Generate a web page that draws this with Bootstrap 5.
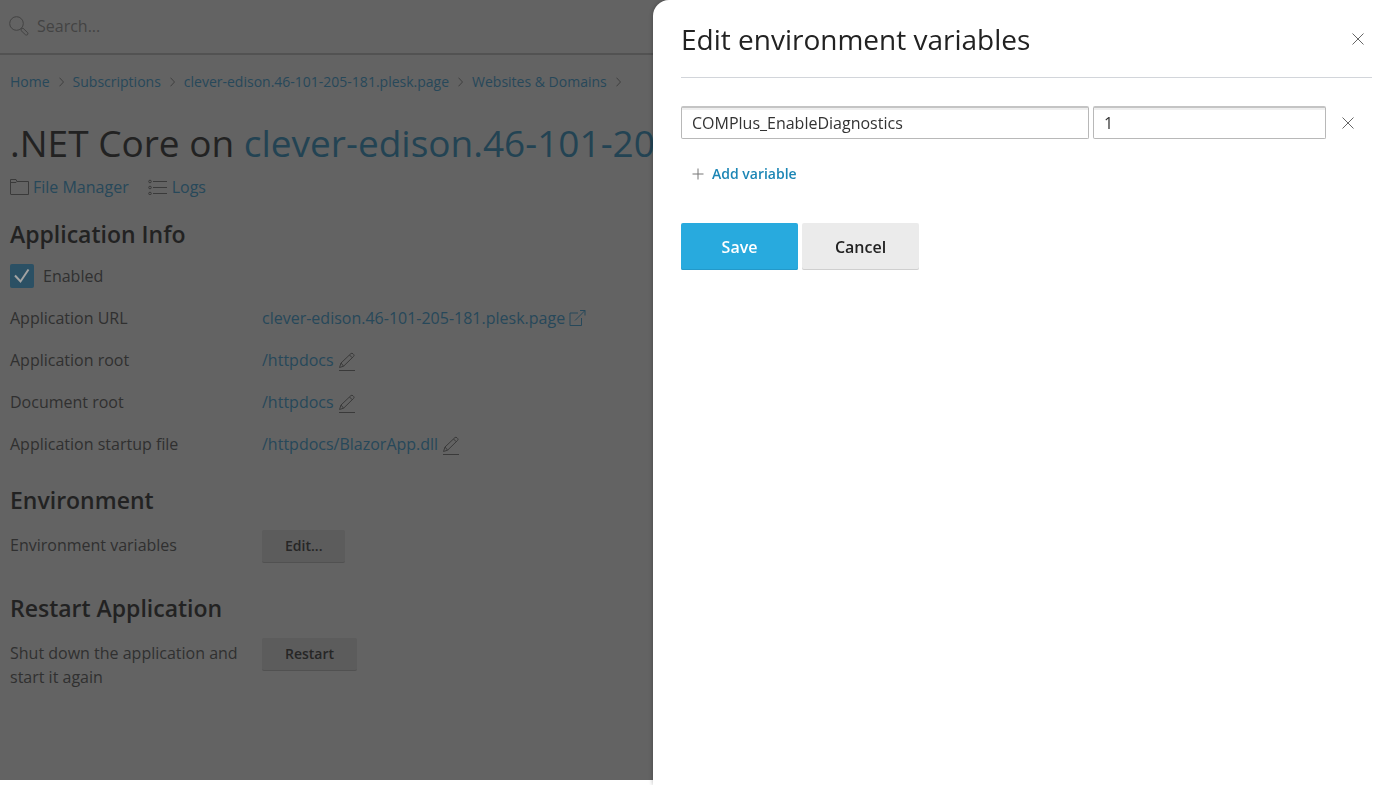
<!DOCTYPE html>
<html lang="en">
<head>
<meta charset="utf-8">
<meta name="viewport" content="width=device-width, initial-scale=1">
<title>.NET Core - Edit environment variables</title>
<link href="https://cdn.jsdelivr.net/npm/bootstrap@5.3.0/dist/css/bootstrap.min.css" rel="stylesheet">
<style>
  body { font-family: "Open Sans", "Noto Sans", sans-serif; font-size: 16px; line-height: 24px; color: #303030; background: #fff; overflow: hidden; --drawer-width: 731px; }
  a { color: #27485a; text-decoration: none; }
  svg { fill: none; stroke: currentColor; flex: none; }
  .dimmed-page { background: #636363; height: calc(100vh - 5px); overflow: hidden; }
  .search-bar { height: 55px; padding: 0 9px 2px; border-bottom: 2px solid #525252; gap: 8px; color: #434343; }
  .search-bar input { background: transparent; border: 0; padding: 0; color: #434343; box-shadow: none; outline: 0; width: 240px; }
  .search-bar input::placeholder { color: #434343; opacity: 1; }
  .page-body { padding: 15px 0 15px 10px; width: calc(100% - var(--drawer-width)); min-width: 0; }
  .breadcrumb { --bs-breadcrumb-margin-bottom: 21px; font-size: 14px; gap: 9px; color: #404040; flex-wrap: nowrap; white-space: nowrap; }
  h1 { font-size: 37px; line-height: 56px; margin: 0 0 4px; font-weight: 400; color: #222; white-space: nowrap; overflow: hidden; }
  h1 a { color: #234353; }
  h2 { font-size: 23px; line-height: 32px; margin: 0; font-weight: 600; color: #222; }
  .tools { gap: 19px; margin-bottom: 19px; }
  .tools a { gap: 4px; }
  .tools svg, .edit-icon { color: #3a3a3a; }
  .field-row { display: grid; grid-template-columns: 232px 1fr; column-gap: 20px; margin-bottom: 18px; }
  .enabled-row { margin: 14px 0 18px; gap: 9px; height: 24px; }
  .enabled-row .form-check-input { width: 24px; height: 24px; margin: 0; border: 0; border-radius: 2px; }
  .enabled-row .form-check-input:checked { background-color: #2b5064; background-image: url("data:image/svg+xml,%3Csvg xmlns='http://www.w3.org/2000/svg' viewBox='0 0 24 24'%3E%3Cpath d='M5 11.5l5.500 6L18.500 5.500' fill='none' stroke='%23a3a3a3' stroke-width='2'/%3E%3C/svg%3E"); background-size: 100%; }
  .btn-dim { --bs-btn-color: #262626; --bs-btn-bg: #5c5c5c; font-size: 14px; line-height: 20px; font-weight: 600; padding: 6px 23px; margin: -3px 0 1px; border: 0; border-bottom: 1px solid #515151; border-radius: 2px; vertical-align: top; }
  .section-gap { margin-top: 28px; margin-bottom: 17px; }
  .offcanvas.edit-drawer { --bs-offcanvas-width: var(--drawer-width); --bs-offcanvas-border-width: 0; border-radius: 16px 0 0 0; box-shadow: 0 0 4px rgba(0,0,0,.3); color: #222; max-width: 100%; padding: 0 12px 0 28px; }
  .drawer-head { height: 78px; border-bottom: 1px solid #d2d5da; margin-bottom: 28px; }
  .drawer-head .offcanvas-title { font-size: 28px; line-height: 40px; font-weight: 400; color: #222; }
  .icon-button { border: 0; background: none; padding: 8px; color: #666; line-height: 0; }
  .variable-row { display: grid; grid-template-columns: 7fr 4fr 36px; column-gap: 4px; align-items: center; padding-right: 6px; }
  .variable-row .form-control { height: 33px; padding: 2px 10px; font-size: 16px; line-height: 24px; color: #333; border: 1px solid #b8b8b8; border-top: 2px solid #c4c4c4; border-radius: 2px; box-shadow: inset 0 2px 0 #efefef; }
  .add-button { color: #1c86b5; font-size: 14px; line-height: 20px; font-weight: 600; border: 0; padding: 6px 11px; gap: 8px; margin: 19px 0 33px; }
  .add-button svg { color: #777; }
  .btn-form { min-width: 117px; height: 47px; font-size: 16px; line-height: 24px; font-weight: 600; border: 0; border-radius: 2px; padding: 0; }
  .btn-save { --bs-btn-color: #fff; --bs-btn-bg: #28aade; box-shadow: inset 0 -1px 0 #2399ca; }
  .btn-cancel { --bs-btn-color: #222; --bs-btn-bg: #ebebeb; box-shadow: inset 0 -1px 0 #cfcfcf; }
</style>
</head>
<body>
<svg class="d-none" aria-hidden="true">
  <symbol id="pencil" viewBox="0 0 18 20"><path d="M1.500 15.500L3 11L13 1.500Q14 .8 15 1.800L15.700 2.500Q16.500 3.500 15.600 4.400L5.600 14.200ZM11.500 3L14.200 5.700M3 11L5.600 14.200M1 18.500H17"/></symbol>
  <symbol id="cross" viewBox="0 0 12 12"><path d="M.5 .5L11.500 11.500M11.500 .5L.5 11.500"/></symbol>
  <symbol id="chevron" viewBox="0 0 5 10"><path d="M.5 .7L4.500 5L.5 9.300"/></symbol>
</svg>
<div class="dimmed-page">
  <header class="search-bar d-flex align-items-center">
    <svg width="20" height="20" viewBox="0 0 20 20"><circle cx="7.500" cy="7.500" r="6.800"/><path d="M12.200 12.700L14 12.200L18.700 16.700Q19.300 18 18.500 18.700T16.500 18.800L12 14.500Z"/></svg>
    <input type="text" placeholder="Search..." aria-label="Search">
  </header>
  <main class="page-body">
    <nav aria-label="breadcrumb">
      <div class="breadcrumb align-items-center">
        <a href="#">Home</a><svg width="5" height="10"><use href="#chevron"/></svg>
        <a href="#">Subscriptions</a><svg width="5" height="10"><use href="#chevron"/></svg>
        <a href="#">clever-edison.46-101-205-181.plesk.page</a><svg width="5" height="10"><use href="#chevron"/></svg>
        <a href="#">Websites &amp; Domains</a><svg width="5" height="10"><use href="#chevron"/></svg>
      </div>
    </nav>
    <h1>.NET Core on <a href="#">clever-edison.46-101-20</a></h1>
    <div class="tools d-flex">
      <a href="#" class="d-flex align-items-center"><svg width="19" height="16" viewBox="0 0 19 16"><path d="M.5 15V.5H6L7 2.500H18.500V15.500H.5M.5 3.500H6L7 2.500"/></svg>File Manager</a>
      <a href="#" class="d-flex align-items-center"><svg width="20" height="16" viewBox="0 0 20 16"><circle cx="2" cy="2.500" r="1.300"/><circle cx="2" cy="8.500" r="1.300"/><circle cx="2" cy="14.500" r="1.300"/><path d="M5 2.500H19M5 8.500H19M5 14.500H19"/></svg>Logs</a>
    </div>
    <section>
      <h2>Application Info</h2>
      <div class="enabled-row d-flex align-items-center">
        <input class="form-check-input" type="checkbox" id="enabled" checked>
        <label for="enabled">Enabled</label>
      </div>
      <div class="field-row"><span>Application URL</span><a href="#" class="d-flex align-items-center gap-1">clever-edison.46-101-205-181.plesk.page<svg width="17" height="18" viewBox="0 0 17 18"><path d="M9 4H1V16.500H12.500V9M6 11.500L16 1.500M11 1.500H16V6.500"/></svg></a></div>
      <div class="field-row"><span>Application root</span><span class="d-flex align-items-center gap-1"><a href="#">/httpdocs</a><svg class="edit-icon mt-1" width="18" height="20"><use href="#pencil"/></svg></span></div>
      <div class="field-row"><span>Document root</span><span class="d-flex align-items-center gap-1"><a href="#">/httpdocs</a><svg class="edit-icon mt-1" width="18" height="20"><use href="#pencil"/></svg></span></div>
      <div class="field-row"><span>Application startup file</span><span class="d-flex align-items-center gap-1"><a href="#">/httpdocs/BlazorApp.dll</a><svg class="edit-icon mt-1" width="18" height="20"><use href="#pencil"/></svg></span></div>
    </section>
    <section>
      <h2 class="section-gap">Environment</h2>
      <div class="field-row"><span>Environment variables</span><div><button type="button" class="btn btn-dim">Edit...</button></div></div>
    </section>
    <section>
      <h2 class="section-gap">Restart Application</h2>
      <div class="field-row"><span>Shut down the application and start it again</span><div><button type="button" class="btn btn-dim">Restart</button></div></div>
    </section>
  </main>
</div>
<aside class="offcanvas offcanvas-end show edit-drawer" data-bs-backdrop="false" data-bs-scroll="true" tabindex="-1" aria-labelledby="drawerTitle">
  <div class="drawer-head d-flex align-items-center justify-content-between">
    <h2 class="offcanvas-title" id="drawerTitle">Edit environment variables</h2>
    <button type="button" class="icon-button" aria-label="Close"><svg width="12" height="12"><use href="#cross"/></svg></button>
  </div>
  <form>
    <div class="variable-row">
      <input class="form-control" type="text" value="COMPlus_EnableDiagnostics" aria-label="Variable name">
      <input class="form-control" type="text" value="1" aria-label="Variable value">
      <button type="button" class="icon-button" aria-label="Remove variable"><svg width="12" height="12"><use href="#cross"/></svg></button>
    </div>
    <button type="button" class="btn add-button d-flex align-items-center"><svg width="12" height="12" viewBox="0 0 12 12"><path d="M6 .5V11.500M.5 6H11.500"/></svg>Add variable</button>
    <div class="d-flex gap-1">
      <button type="button" class="btn btn-form btn-save">Save</button>
      <button type="button" class="btn btn-form btn-cancel">Cancel</button>
    </div>
  </form>
</aside>
<script src="https://cdn.jsdelivr.net/npm/bootstrap@5.3.0/dist/js/bootstrap.bundle.min.js"></script>
</body>
</html>
